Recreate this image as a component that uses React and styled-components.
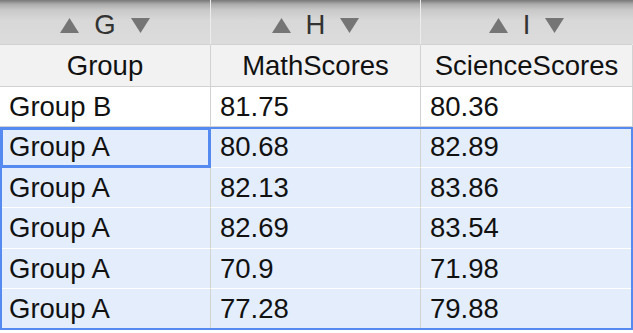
import React from 'react'
import styled, { createGlobalStyle } from 'styled-components'

const GlobalStyle = createGlobalStyle`
  html, body { margin: 0; padding: 0; background: #fff; }
  body { font-family: "Liberation Sans", Arial, sans-serif; }
`

const columns = [
  { letter: 'G', field: 'Group', key: 'group' },
  { letter: 'H', field: 'MathScores', key: 'math' },
  { letter: 'I', field: 'ScienceScores', key: 'science' },
]

const rows = [
  { group: 'Group B', math: '81.75', science: '80.36' },
  { group: 'Group A', math: '80.68', science: '82.89' },
  { group: 'Group A', math: '82.13', science: '83.86' },
  { group: 'Group A', math: '82.69', science: '83.54' },
  { group: 'Group A', math: '70.9', science: '71.98' },
  { group: 'Group A', math: '77.28', science: '79.88' },
]

const rowHeights = [40, 41, 40, 41, 40, 41]

const Sheet = styled.div`
  position: relative;
  width: 633px;
  display: grid;
  grid-template-columns: 211px 210px 212px;
  color: #111;
  font-size: 27.5px;
`

const LetterCell = styled.div`
  height: 45px;
  box-sizing: border-box;
  display: flex;
  align-items: center;
  justify-content: center;
  gap: 15px;
  padding-top: 5px;
  background: linear-gradient(to bottom, #777 0, #aaa 4px, #c9c9c9 10px, #d8d8d8 20px, #dcdcdc 100%);
  border-right: 1px solid ${p => (p.$last ? 'transparent' : '#ececec')};
  border-bottom: 1px solid #d2d2d2;
  color: #333;
`

const Arrow = styled.svg`
  flex-shrink: 0;
  display: block;
  width: 19px;
  height: 15px;
  fill: #757575;
  margin-top: 1px;
`

const FieldCell = styled.div`
  height: 42px;
  box-sizing: border-box;
  display: flex;
  align-items: center;
  justify-content: center;
  background: #f2f2f2;
  border-right: 1px solid #d2d2d2;
  border-bottom: 1px solid #d2d2d2;
`

const DataCell = styled.div`
  box-sizing: border-box;
  display: flex;
  align-items: center;
  padding-left: 9px;
  background: ${p => (p.$selected ? '#e4edfc' : '#fff')};
  border-right: 1px solid #d2d2d2;
  border-bottom: 1px solid ${p => (p.$selected ? '#fff' : '#d2d2d2')};
  outline: ${p => (p.$active ? '3px solid #558bf0' : 'none')};
  outline-offset: -3px;
`

const Selection = styled.div`
  position: absolute;
  left: 0;
  right: 0;
  top: 127px;
  bottom: 0;
  border: 2px solid #558bf0;
  pointer-events: none;
`

const Up = () => (
  <Arrow viewBox="0 0 19 15">
    <polygon points="9.5,0 19,15 0,15" />
  </Arrow>
)

const Down = () => (
  <Arrow viewBox="0 0 19 15">
    <polygon points="0,0 19,0 9.5,15" />
  </Arrow>
)

export default function App() {
  return (
    <>
      <GlobalStyle />
      <Sheet>
        {columns.map((c, i) => (
          <LetterCell key={c.letter} $last={i === columns.length - 1}>
            <Up />
            <span>{c.letter}</span>
            <Down />
          </LetterCell>
        ))}
        {columns.map(c => (
          <FieldCell key={c.field}>{c.field}</FieldCell>
        ))}
        {rows.map((r, ri) =>
          columns.map((c, ci) => (
            <DataCell
              key={ri + c.key}
              style={{ height: rowHeights[ri] }}
              $selected={ri > 0}
              $active={ri === 1 && ci === 0}
            >
              {r[c.key]}
            </DataCell>
          ))
        )}
        <Selection />
      </Sheet>
    </>
  )
}
